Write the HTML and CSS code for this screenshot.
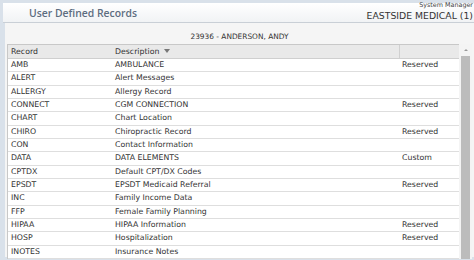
FILE: index.html
```html
<html>
<head>
  <title>User Defined Records</title>
  <link rel="stylesheet" href="styles.css">
</head>
<body>
  <div class="page">
    <div class="titleBar">
      <span class="title">User Defined Records</span>
      <div class="org">
        <span class="role">System Manager</span>
        <span class="orgName">EASTSIDE MEDICAL (1)</span>
      </div>
    </div>

    <div class="content">
      <div class="patient">23936 - ANDERSON, ANDY</div>

      <div class="gridWrap">
        <div class="grid">
          <div class="row head">
            <span class="colRec">Record</span>
            <span class="colDesc">Description <span class="sortArrow"></span></span>
            <span class="colType"></span>
          </div>
          <div class="row"><span class="colRec">AMB</span><span class="colDesc">AMBULANCE</span><span class="colType">Reserved</span></div>
          <div class="row"><span class="colRec">ALERT</span><span class="colDesc">Alert Messages</span><span class="colType"></span></div>
          <div class="row"><span class="colRec">ALLERGY</span><span class="colDesc">Allergy Record</span><span class="colType"></span></div>
          <div class="row"><span class="colRec">CONNECT</span><span class="colDesc">CGM CONNECTION</span><span class="colType">Reserved</span></div>
          <div class="row"><span class="colRec">CHART</span><span class="colDesc">Chart Location</span><span class="colType"></span></div>
          <div class="row"><span class="colRec">CHIRO</span><span class="colDesc">Chiropractic Record</span><span class="colType">Reserved</span></div>
          <div class="row"><span class="colRec">CON</span><span class="colDesc">Contact Information</span><span class="colType"></span></div>
          <div class="row"><span class="colRec">DATA</span><span class="colDesc">DATA ELEMENTS</span><span class="colType">Custom</span></div>
          <div class="row"><span class="colRec">CPTDX</span><span class="colDesc">Default CPT/DX Codes</span><span class="colType"></span></div>
          <div class="row"><span class="colRec">EPSDT</span><span class="colDesc">EPSDT Medicaid Referral</span><span class="colType">Reserved</span></div>
          <div class="row"><span class="colRec">INC</span><span class="colDesc">Family Income Data</span><span class="colType"></span></div>
          <div class="row"><span class="colRec">FFP</span><span class="colDesc">Female Family Planning</span><span class="colType"></span></div>
          <div class="row"><span class="colRec">HIPAA</span><span class="colDesc">HIPAA Information</span><span class="colType">Reserved</span></div>
          <div class="row"><span class="colRec">HOSP</span><span class="colDesc">Hospitalization</span><span class="colType">Reserved</span></div>
          <div class="row"><span class="colRec">INOTES</span><span class="colDesc">Insurance Notes</span><span class="colType"></span></div>
        </div>

        <div class="scrollBar">
          <div class="scrollUp"></div>
          <div class="scrollThumb"></div>
        </div>
      </div>
    </div>
  </div>
</body>
</html>
```

FILE: styles.css
```css
body {
  margin: 0;
  background: #d9e1ea;
  font-family: "DejaVu Sans", Verdana, sans-serif;
  color: #333;
  overflow: hidden;
}

.page {
  padding: 3px 0 0 5px;
  height: 260px;
  box-sizing: border-box;
}

/* top bar with the screen title */
.titleBar {
  display: flex;
  justify-content: space-between;
  height: 19px;
  background: linear-gradient(#ffffff, #f1f3f5);
  border-bottom: 1px solid #c9cfd6;
  margin-left: -2px;
}

.title {
  font-family: "Open Sans", sans-serif;
  font-weight: 600;
  font-size: 10.4px;
  color: #5d6d80;
  padding: 3px 0 0 26px;
}

.org {
  display: flex;
  flex-direction: column;
  align-items: flex-end;
  margin-top: -2px;
  padding-right: 1px;
  white-space: nowrap;
}

.role {
  font-size: 6.4px;
  color: #444;
}

.orgName {
  font-size: 9.3px;
  color: #333;
  margin-top: 1px;
}

.content {
  background: #f5f5f5;
  height: 234px;
  padding: 0 2px 0 2px;
}

.patient {
  text-align: center;
  font-size: 7.4px;
  padding-top: 9px;
  height: 12px;
}

.gridWrap {
  display: flex;
  background: #fff;
}

.grid {
  width: 452px;
  border-left: 1px solid #c8c8c8;
  border-top: 1px solid #c8c8c8;
  box-sizing: border-box;
}

.row {
  display: flex;
  height: 13.33px;
  box-sizing: border-box;
  border-bottom: 1px solid #dedede;
  font-size: 7.8px;
  line-height: 12px;
  white-space: nowrap;
}

.row.head {
  height: 14px;
  background: #e9e9e9;
  border-bottom: 1px solid #cfcfcf;
  line-height: 13px;
}

.colRec {
  width: 105px;
  padding-left: 3px;
  box-sizing: border-box;
}

.colDesc {
  width: 286px;
  padding-left: 2px;
  box-sizing: border-box;
}

.colType {
  width: 60px;
  padding-left: 3px;
  box-sizing: border-box;
}

.head .colType {
  border-left: 1px solid #d0d0d0;
}

.sortArrow {
  display: inline-block;
  width: 0;
  height: 0;
  border-left: 3px solid transparent;
  border-right: 3px solid transparent;
  border-top: 4px solid #777;
  margin-left: 2px;
  vertical-align: 1px;
}

.scrollBar {
  width: 13px;
  background: #f4f4f4;
  display: flex;
  flex-direction: column;
  align-items: center;
}

.scrollUp {
  width: 0;
  height: 0;
  margin-top: 5px;
  border-left: 2px solid transparent;
  border-right: 2px solid transparent;
  border-bottom: 2px solid #999;
}

.scrollThumb {
  width: 9px;
  flex: 1;
  margin-top: 5px;
  background: #bcbcbc;
}
```
